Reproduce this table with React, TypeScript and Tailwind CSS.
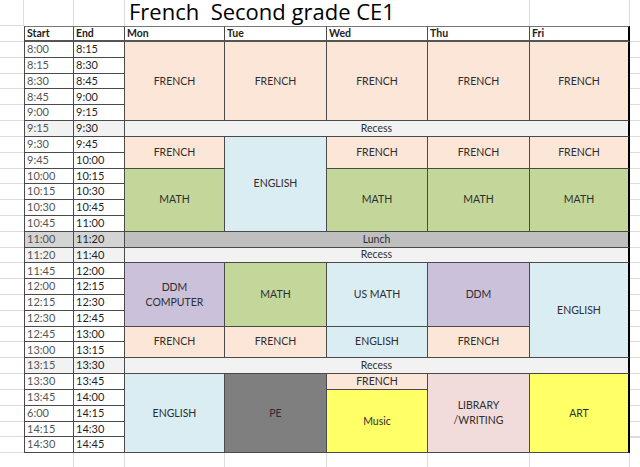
const times: [string, string, string][] = [
  ["8:00", "8:15", ""],
  ["8:15", "8:30", ""],
  ["8:30", "8:45", ""],
  ["8:45", "9:00", ""],
  ["9:00", "9:15", ""],
  ["9:15", "9:30", "bg-[#f2f2f2]"],
  ["9:30", "9:45", ""],
  ["9:45", "10:00", ""],
  ["10:00", "10:15", ""],
  ["10:15", "10:30", ""],
  ["10:30", "10:45", ""],
  ["10:45", "11:00", ""],
  ["11:00", "11:20", "bg-[#d4d4d4]"],
  ["11:20", "11:40", "bg-[#f2f2f2]"],
  ["11:45", "12:00", ""],
  ["12:00", "12:15", ""],
  ["12:15", "12:30", ""],
  ["12:30", "12:45", ""],
  ["12:45", "13:00", ""],
  ["13:00", "13:15", ""],
  ["13:15", "13:30", "bg-[#f2f2f2]"],
  ["13:30", "13:45", ""],
  ["13:45", "14:00", ""],
  ["6:00", "14:15", ""],
  ["14:15", "14:30", ""],
  ["14:30", "14:45", ""],
];

const rows = "grid-rows-[26px_16px_repeat(26,15.82px)_1fr]";

const FRENCH = "bg-[#fce6d8]";
const MATH = "bg-[#c4d79b]";
const ENGLISH = "bg-[#daedf3]";
const DDM = "bg-[#ccc1da]";

type Block = { pos: string; bg: string; text?: string; fri?: boolean };

// day blocks, cols 1..5 = Mon..Fri, row 3 = 8:00 slot
const blocks: Block[] = [
  { pos: "col-start-1 row-start-3 row-span-5", bg: FRENCH, text: "FRENCH" },
  { pos: "col-start-2 row-start-3 row-span-5", bg: FRENCH, text: "FRENCH" },
  { pos: "col-start-3 row-start-3 row-span-5", bg: FRENCH, text: "FRENCH" },
  { pos: "col-start-4 row-start-3 row-span-5", bg: FRENCH, text: "FRENCH" },
  { pos: "col-start-5 row-start-3 row-span-5", bg: FRENCH, text: "FRENCH", fri: true },
  { pos: "col-start-1 col-span-5 row-start-8", bg: "bg-[#f2f2f2]", text: "Recess", fri: true },

  { pos: "col-start-1 row-start-9 row-span-2", bg: FRENCH, text: "FRENCH" },
  { pos: "col-start-1 row-start-11 row-span-4", bg: MATH, text: "MATH" },
  { pos: "col-start-2 row-start-9 row-span-6", bg: ENGLISH, text: "ENGLISH" },
  { pos: "col-start-3 row-start-9 row-span-2", bg: FRENCH, text: "FRENCH" },
  { pos: "col-start-3 row-start-11 row-span-4", bg: MATH, text: "MATH" },
  { pos: "col-start-4 row-start-9 row-span-2", bg: FRENCH, text: "FRENCH" },
  { pos: "col-start-4 row-start-11 row-span-4", bg: MATH, text: "MATH" },
  { pos: "col-start-5 row-start-9 row-span-2", bg: FRENCH, text: "FRENCH", fri: true },
  { pos: "col-start-5 row-start-11 row-span-4", bg: MATH, text: "MATH", fri: true },

  { pos: "col-start-1 col-span-5 row-start-15", bg: "bg-[#bfbfbf]", text: "Lunch", fri: true },
  { pos: "col-start-1 col-span-5 row-start-16", bg: "bg-[#f2f2f2]", text: "Recess", fri: true },

  { pos: "col-start-1 row-start-17 row-span-4", bg: DDM, text: "DDM\nCOMPUTER" },
  { pos: "col-start-2 row-start-17 row-span-4", bg: MATH, text: "MATH" },
  { pos: "col-start-3 row-start-17 row-span-4", bg: ENGLISH, text: "US MATH" },
  { pos: "col-start-4 row-start-17 row-span-4", bg: DDM, text: "DDM" },
  { pos: "col-start-5 row-start-17 row-span-6", bg: ENGLISH, text: "ENGLISH", fri: true },
  { pos: "col-start-1 row-start-21 row-span-2", bg: FRENCH, text: "FRENCH" },
  { pos: "col-start-2 row-start-21 row-span-2", bg: FRENCH, text: "FRENCH" },
  { pos: "col-start-3 row-start-21 row-span-2", bg: ENGLISH, text: "ENGLISH" },
  { pos: "col-start-4 row-start-21 row-span-2", bg: FRENCH, text: "FRENCH" },

  { pos: "col-start-1 col-span-5 row-start-23", bg: "bg-[#f2f2f2]", text: "Recess", fri: true },

  { pos: "col-start-1 row-start-24 row-span-5", bg: ENGLISH, text: "ENGLISH" },
  { pos: "col-start-2 row-start-24 row-span-5", bg: "bg-[#7f7f7f]", text: "PE" },
  { pos: "col-start-3 row-start-24", bg: FRENCH, text: "FRENCH" },
  { pos: "col-start-3 row-start-25 row-span-4", bg: "bg-[#ffff66]", text: "Music" },
  { pos: "col-start-4 row-start-24 row-span-5", bg: "bg-[#f2dcdb]", text: "LIBRARY\n/WRITING" },
  { pos: "col-start-5 row-start-24 row-span-5", bg: "bg-[#ffff66]", text: "ART", fri: true },
];

const headers = [
  { pos: "col-start-1 row-start-2", label: "Mon" },
  { pos: "col-start-2 row-start-2", label: "Tue" },
  { pos: "col-start-3 row-start-2", label: "Wed" },
  { pos: "col-start-4 row-start-2", label: "Thu" },
  { pos: "col-start-5 row-start-2", label: "Fri" },
];

function Cell({ pos, bg, text, fri }: Block) {
  return (
    <div
      className={`${pos} ${bg} flex items-center justify-center whitespace-pre-line text-center text-[10.5px] leading-[15px] text-[#2e2e2e] border-b border-b-[#4a4a4a] ${
        fri ? "border-r-2 border-r-black" : "border-r border-r-[#4a4a4a]"
      }`}
    >
      {text}
    </div>
  );
}

export default function App() {
  return (
    <div className="flex h-[467px] w-[640px] bg-white font-[Lato,'Liberation_Sans',sans-serif]">
      {/* blank col + Start + End */}
      <div className={`grid h-full grid-cols-[24px_50px_51px] ${rows}`}>
        <div className="border-r border-b border-[#dcdcdc]" />
        <div className="border-r border-[#dcdcdc]" />
        <div className="border-r border-[#dcdcdc]" />

        <div className="border-b border-[#dcdcdc]" />
        <div className="border-l border-t border-r border-b-2 border-l-[#4a4a4a] border-t-[#777] border-r-[#4a4a4a] border-b-[#555] pl-0.5 text-[10.5px] font-bold leading-[13px] text-[#222]">
          Start
        </div>
        <div className="border-t border-r border-b-2 border-t-[#777] border-r-[#4a4a4a] border-b-[#555] pl-0.5 text-[10.5px] font-bold leading-[13px] text-[#222]">
          End
        </div>

        {times.map(([s, e, shade]) => (
          <div key={s + e} className="contents">
            <div className="border-b border-[#dcdcdc]" />
            <div className={`${shade} flex items-center border-l border-r border-b border-[#4a4a4a] pl-0.5 text-[11px] text-[#555]`}>
              {s}
            </div>
            <div className={`${shade} flex items-center border-r border-b border-[#4a4a4a] pl-0.5 text-[11px] text-[#1f1f1f]`}>
              {e}
            </div>
          </div>
        ))}

        <div />
        <div className="border-r border-[#dcdcdc]" />
        <div className="border-r border-[#dcdcdc]" />
      </div>

      {/* Mon..Fri */}
      <div className={`grid h-full grid-cols-[100px_102px_101px_102px_100px] ${rows}`}>
        <div className="col-start-1 col-span-3 row-start-1 whitespace-pre pl-1 font-['Open_Sans',sans-serif] text-[22px] leading-[23px] text-black">
          French  Second grade CE1
        </div>
        <div className="col-start-4 row-start-1 border-r border-[#dcdcdc]" />
        <div className="col-start-5 row-start-1 border-r border-[#dcdcdc]" />

        {headers.map((h) => (
          <div
            key={h.label}
            className={`${h.pos} border-t border-b-2 border-t-[#777] border-b-[#555] pl-0.5 text-[10.5px] font-bold leading-[13px] text-[#222] ${
              h.label === "Fri" ? "border-r-2 border-r-black" : "border-r border-r-[#4a4a4a]"
            }`}
          >
            {h.label}
          </div>
        ))}

        {blocks.map((b, i) => (
          <Cell key={i} {...b} />
        ))}

        <div className="col-start-1 row-start-29 border-r border-[#dcdcdc]" />
        <div className="col-start-2 row-start-29 border-r border-[#dcdcdc]" />
        <div className="col-start-3 row-start-29 border-r border-[#dcdcdc]" />
        <div className="col-start-4 row-start-29 border-r border-[#dcdcdc]" />
        <div className="col-start-5 row-start-29 border-r border-[#dcdcdc]" />
      </div>

      {/* blank col on the right */}
      <div className={`grid h-full flex-1 ${rows}`}>
        <div />
        {times.map(([s, e]) => (
          <div key={s + e} className="border-b border-[#dcdcdc]" />
        ))}
        <div className="border-t border-[#dcdcdc]" />
        <div />
      </div>
    </div>
  );
}
